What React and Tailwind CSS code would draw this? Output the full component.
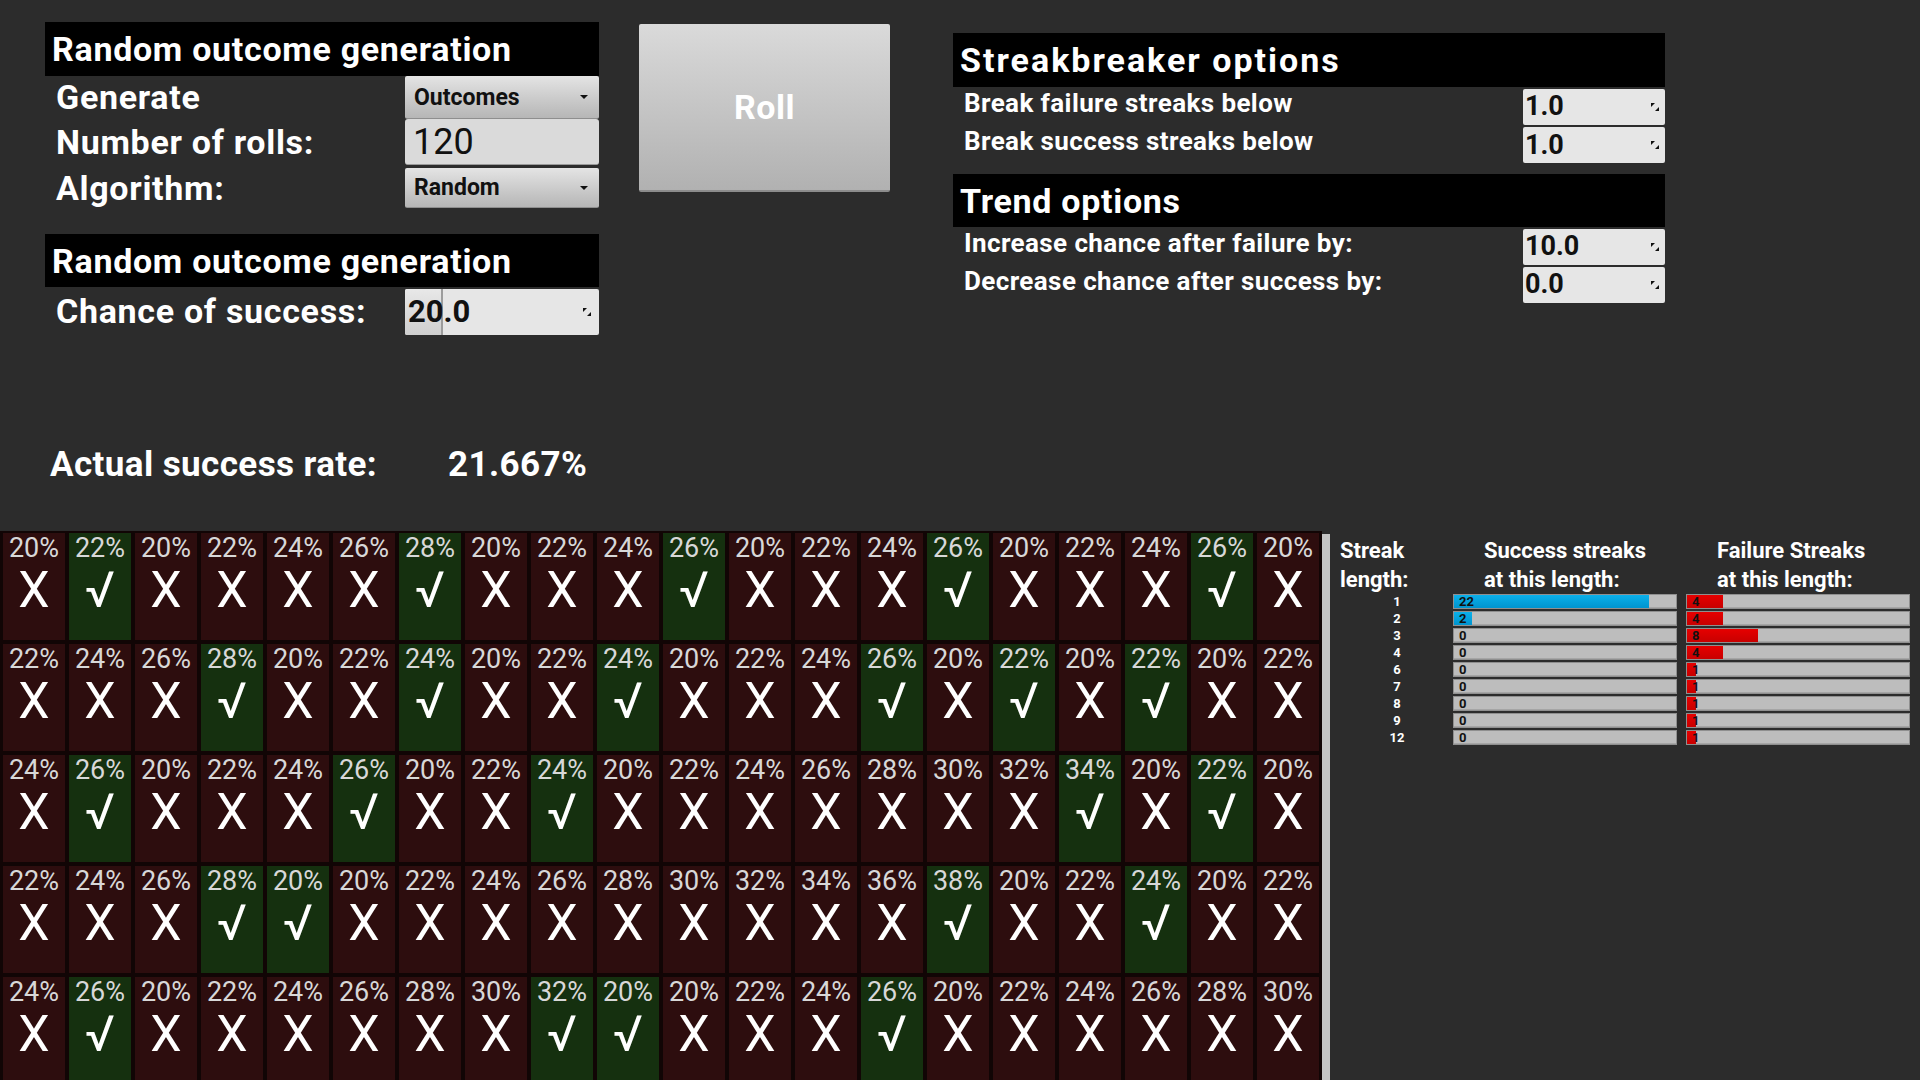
import React from "react";

const rows = [
  "20x 22v 20x 22x 24x 26x 28v 20x 22x 24x 26v 20x 22x 24x 26v 20x 22x 24x 26v 20x",
  "22x 24x 26x 28v 20x 22x 24v 20x 22x 24v 20x 22x 24x 26v 20x 22v 20x 22v 20x 22x",
  "24x 26v 20x 22x 24x 26v 20x 22x 24v 20x 22x 24x 26x 28x 30x 32x 34v 20x 22v 20x",
  "22x 24x 26x 28v 20v 20x 22x 24x 26x 28x 30x 32x 34x 36x 38v 20x 22x 24v 20x 22x",
  "24x 26v 20x 22x 24x 26x 28x 30x 32v 20v 20x 22x 24x 26v 20x 22x 24x 26x 28x 30x",
];

const cells = rows.flatMap((r) =>
  r.split(" ").map((c) => ({ pct: c.slice(0, 2), ok: c[2] === "v" }))
);

const streaks = [
  { len: 1, s: 22, f: 4 },
  { len: 2, s: 2, f: 4 },
  { len: 3, s: 0, f: 8 },
  { len: 4, s: 0, f: 4 },
  { len: 6, s: 0, f: 1 },
  { len: 7, s: 0, f: 1 },
  { len: 8, s: 0, f: 1 },
  { len: 9, s: 0, f: 1 },
  { len: 12, s: 0, f: 1 },
];

function Arrow() {
  return (
    <svg width="10" height="6" viewBox="0 0 10 6" className="shrink-0">
      <path d="M1 1h8L5 5z" fill="#111" />
    </svg>
  );
}

function Grip() {
  return (
    <svg width="8" height="8" viewBox="0 0 8 8" className="shrink-0">
      <path d="M0 0h4L0 4z" fill="#111" />
      <path d="M8 8H4l4-4z" fill="#111" />
    </svg>
  );
}

function Dropdown({ value, h }) {
  return (
    <div
      className={`w-[194px] ${h} flex items-center justify-between pl-[9px] pr-[10px] rounded-[2px] bg-gradient-to-b from-[#e4e4e4] to-[#b6b6b6] border-b border-[#8e8e8e]`}
    >
      <span className="text-[23px] font-bold text-[#111] leading-none">{value}</span>
      <Arrow />
    </div>
  );
}

function Spin({ value }) {
  return (
    <div className="w-[142px] h-[36px] bg-[#e6e6e6] rounded-[2px] flex items-center justify-between pl-[2px] pr-[6px]">
      <span className="text-[27px] font-bold text-[#111] leading-none">{value}</span>
      <Grip />
    </div>
  );
}

function Header({ children, h, track = "tracking-[0.7px]" }) {
  return (
    <div className={`${h} bg-black flex items-center pl-[7px]`}>
      <span className={`text-[34px] font-bold text-white leading-none ${track}`}>{children}</span>
    </div>
  );
}

function Label({ children }) {
  return (
    <span className="pl-[11px] text-[34px] font-bold text-white tracking-[0.7px]">{children}</span>
  );
}

function SmallLabel({ children }) {
  return (
    <span className="pl-[11px] mb-[7px] text-[26px] font-bold text-white tracking-[0.4px]">
      {children}
    </span>
  );
}

function Bar({ value, color }) {
  const pct = (value / 25) * 100;
  return (
    <div className="relative h-[15px] bg-[#bdbdbd] border border-[#8f8f8f] shadow-[inset_0_-1px_0_#a5a5a5]">
      <div
        className={`absolute left-0 top-0 bottom-0 ${color}`}
        style={{ width: `${pct}%` }}
      />
      <span className="relative pl-[5px] text-[13px] font-bold text-[#111] leading-[13px] block">
        {value}
      </span>
    </div>
  );
}

export default function App() {
  return (
    <div className="w-[1920px] h-[1080px] bg-[#2c2c2c] overflow-hidden flex flex-col font-['Roboto','Liberation_Sans',sans-serif]">
      {/* settings */}
      <div className="h-[531px] shrink-0 flex flex-col">
        <div className="flex items-start">
          <div className="ml-[45px] mt-[22px] w-[554px] flex flex-col">
            <Header h="h-[54px]">Random outcome generation</Header>
            <div className="flex items-center justify-between h-[43px]">
              <Label>Generate</Label>
              <Dropdown value="Outcomes" h="h-[43px]" />
            </div>
            <div className="flex items-center justify-between h-[46px]">
              <Label>Number of rolls:</Label>
              <div className="w-[194px] h-[46px] bg-[#dadada] rounded-[3px] flex items-center pl-[8px] border-b border-[#9a9a9a]">
                <span className="text-[36px] text-[#111] leading-none">120</span>
              </div>
            </div>
            <div className="flex items-center justify-between h-[40px] mt-[3px]">
              <Label>Algorithm:</Label>
              <Dropdown value="Random" h="h-[40px]" />
            </div>
            <div className="mt-[26px]">
              <Header h="h-[53px]">Random outcome generation</Header>
            </div>
            <div className="flex items-center justify-between h-[47px] mt-[1px]">
              <Label>Chance of success:</Label>
              <div className="relative w-[194px] h-[46px] bg-[#e6e6e6] rounded-[2px] flex items-center justify-between pr-[8px]">
                <div className="absolute left-0 top-0 bottom-0 w-[38px] rounded-l-[2px] bg-gradient-to-b from-[#e8e8e8] to-[#cfcfcf] border-r-2 border-[#9c9c9c]" />
                <span className="relative pl-[3px] text-[31px] font-bold text-[#111] leading-none">20.0</span>
                <Grip />
              </div>
            </div>
          </div>

          <div className="ml-[40px] mt-[24px] w-[251px] h-[168px] rounded-[2px] bg-gradient-to-b from-[#dadada] to-[#b1b1b1] border-b-2 border-[#8c8c8c] flex items-center justify-center">
            <span className="text-[34px] font-bold text-white leading-none tracking-[0.5px]">Roll</span>
          </div>

          <div className="ml-[63px] mt-[33px] w-[712px] flex flex-col">
            <Header h="h-[54px]" track="tracking-[2px]">Streakbreaker options</Header>
            <div className="flex items-center justify-between h-[37px] mt-[1px]">
              <SmallLabel>Break failure streaks below</SmallLabel>
              <Spin value="1.0" />
            </div>
            <div className="flex items-center justify-between h-[38px] mt-[1px]">
              <SmallLabel>Break success streaks below</SmallLabel>
              <Spin value="1.0" />
            </div>
            <div className="mt-[10px]">
              <Header h="h-[53px]">Trend options</Header>
            </div>
            <div className="flex items-center justify-between h-[37px] mt-[1px]">
              <SmallLabel>Increase chance after failure by:</SmallLabel>
              <Spin value="10.0" />
            </div>
            <div className="flex items-center justify-between h-[37px] mt-[1px]">
              <SmallLabel>Decrease chance after success by:</SmallLabel>
              <Spin value="0.0" />
            </div>
          </div>
        </div>

        <div className="flex items-center h-[40px] mt-[110px] pl-[50px] text-[35px] font-bold text-white tracking-[0.4px]">
          <span className="w-[398px]">Actual success rate:</span>
          <span>21.667%</span>
        </div>
      </div>

      {/* results */}
      <div className="flex flex-1 min-h-0">
        <div className="w-[1322px] bg-[#110505] px-[3px] pt-[2px] grid grid-cols-20 gap-[4px] content-start overflow-hidden">
          {cells.map((c, i) => (
            <div
              key={i}
              className={`h-[107px] flex flex-col items-center ${c.ok ? "bg-[#15300f]" : "bg-[#2d0d0e]"}`}
            >
              <span className="text-[27px] leading-[30px] text-[#d8d8d8]">{c.pct}%</span>
              <span className="-mt-[1px] text-[50px] leading-[56px] text-white">{c.ok ? "√" : "X"}</span>
            </div>
          ))}
        </div>
        <div className="w-[8px] mt-[3px] bg-[#c4c4c4]" />
        <div className="flex-1 pt-[5px]">
          <div className="grid grid-cols-[114px_224px_224px] gap-x-[9px] text-white font-bold">
            <div className="pl-[10px] text-[22px] leading-[29px]">
              Streak
              <br />
              length:
            </div>
            <div className="pl-[31px] text-[22px] leading-[29px]">
              Success streaks
              <br />
              at this length:
            </div>
            <div className="pl-[31px] text-[22px] leading-[29px]">
              Failure Streaks
              <br />
              at this length:
            </div>
          </div>
          <div className="grid grid-cols-[114px_224px_224px] gap-x-[9px] gap-y-[2px]">
            {streaks.map((r) => (
              <React.Fragment key={r.len}>
                <div className="pl-[20px] text-center text-[13px] font-bold text-white leading-[15px]">{r.len}</div>
                <Bar value={r.s} color="bg-gradient-to-b from-[#0bb0ea] to-[#0094cf]" />
                <Bar value={r.f} color="bg-gradient-to-b from-[#e60000] to-[#c80000]" />
              </React.Fragment>
            ))}
          </div>
        </div>
      </div>
    </div>
  );
}
